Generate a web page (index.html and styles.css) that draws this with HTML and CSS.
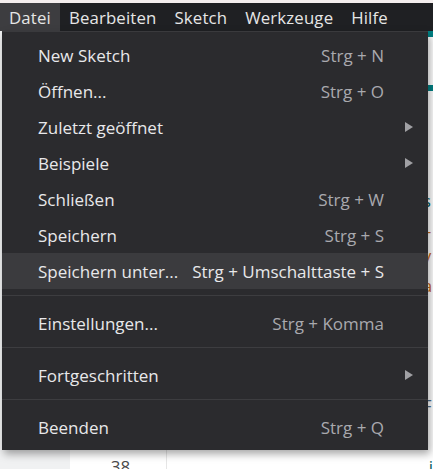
FILE: index.html
```html
<!DOCTYPE html>
<html lang="de">
<head>
<meta charset="utf-8">
<link rel="stylesheet" href="styles.css">
</head>
<body>
<div class="app">
  <div class="topstrip"></div>
  <nav class="menubar">
    <span class="mitem active">Datei</span>
    <span class="mitem">Bearbeiten</span>
    <span class="mitem">Sketch</span>
    <span class="mitem">Werkzeuge</span>
    <span class="mitem">Hilfe</span>
  </nav>
  <div class="workspace">
    <div class="sidebar"></div>
    <div class="gutter"><span class="lineno">38</span></div>
    <div class="code">
      <div class="tb tb1"></div>
      <div class="tb tb2"></div>
      <div class="cline c-teal">s</div>
      <div class="cline c-orange small">–</div>
      <div class="cline c-orange">y</div>
      <div class="cline c-orange">a</div>
      <div class="cline c-blue">F</div>
      <div class="cline last"><span class="c-teal">i</span></div>
    </div>
  </div>

  <div class="dropdown">
    <div class="row"><span class="label">New Sketch</span><span class="sc">Strg + N</span><span class="arr"></span></div>
    <div class="row"><span class="label">Öffnen...</span><span class="sc">Strg + O</span><span class="arr"></span></div>
    <div class="row"><span class="label">Zuletzt geöffnet</span><span class="sc"></span><span class="arr"><i class="tri"></i></span></div>
    <div class="row"><span class="label">Beispiele</span><span class="sc"></span><span class="arr"><i class="tri"></i></span></div>
    <div class="row"><span class="label">Schließen</span><span class="sc">Strg + W</span><span class="arr"></span></div>
    <div class="row"><span class="label">Speichern</span><span class="sc">Strg + S</span><span class="arr"></span></div>
    <div class="row hl"><span class="label">Speichern unter...</span><span class="sc">Strg + Umschalttaste + S</span><span class="arr"></span></div>
    <div class="sep"></div>
    <div class="row"><span class="label">Einstellungen...</span><span class="sc">Strg + Komma</span><span class="arr"></span></div>
    <div class="sep"></div>
    <div class="row"><span class="label">Fortgeschritten</span><span class="sc"></span><span class="arr"><i class="tri"></i></span></div>
    <div class="sep"></div>
    <div class="row"><span class="label">Beenden</span><span class="sc">Strg + Q</span><span class="arr"></span></div>
  </div>
</div>
</body>
</html>
```

FILE: styles.css
```css
* { box-sizing: border-box; }
html, body { margin: 0; padding: 0; }
body {
  width: 433px;
  height: 469px;
  overflow: hidden;
  background: #ffffff;
  font-family: "Open Sans", "Noto Sans", sans-serif;
}
.app {
  position: relative;
  width: 433px;
  height: 469px;
  display: flex;
  flex-direction: column;
}
.topstrip {
  height: 3px;
  background: #f4eeee;
}
.menubar {
  height: 28px;
  background: #1f2023;
  display: flex;
  align-items: stretch;
}
.mitem {
  padding: 0 9px;
  display: flex;
  align-items: center;
  color: #e6e6e6;
  font-size: 16.8px;
  letter-spacing: 0.15px;
}
.mitem.active {
  background: #3d3d40;
}
.workspace {
  flex: 1;
  display: flex;
}
.sidebar {
  width: 72px;
  background: #f0f1f2;
}
.gutter {
  width: 100px;
  background: #ffffff;
  border-right: 1px solid #e6e6e6;
  display: flex;
  flex-direction: column;
  justify-content: flex-end;
}
.lineno {
  padding-left: 41px;
  font-size: 17px;
  color: #4a4a4a;
  line-height: 22px;
  height: 13px;
  overflow: hidden;
}
.code {
  flex: 1;
  display: flex;
  flex-direction: column;
  padding-left: 256px;
  font-size: 17px;
}
.tb {
  height: 6px;
  background: #008184;
}
.tb1 { margin-top: 0; }
.tb2 { margin-top: 48px; }
.cline {
  height: 30px;
  line-height: 30px;
}
.cline:nth-of-type(3) { margin-top: 95px; }
.c-teal { color: #005c5f; }
.c-orange { color: #c96a1a; }
.c-blue { color: #4a6b8a; }
.cline.small { height: 25px; }
.cline.c-blue { margin-top: 90px; }
.cline.last { margin-top: auto; height: 13px; line-height: 22px; overflow: hidden; padding-left: 6px; }

.dropdown {
  position: absolute;
  top: 31px;
  left: 2px;
  width: 426px;
  background: #2b2b2e;
  border-top: 1px solid #3a3a3d;
  padding: 5px 0 5px;
  box-shadow: 2px 4px 8px rgba(0,0,0,0.35);
  font-size: 17px;
}
.row {
  height: 36px;
  display: grid;
  grid-template-columns: 1fr auto 44px;
  align-items: center;
  padding-left: 36px;
  color: #e8e8ea;
}
.row.hl {
  background: #3b3b3e;
}
.sc {
  color: #a9a9ae;
}
.row.hl .sc { color: #e8e8ea; }
.arr {
  display: flex;
  align-items: center;
  padding-left: 21px;
}
.tri {
  display: block;
  width: 0;
  height: 0;
  border-top: 5px solid transparent;
  border-bottom: 5px solid transparent;
  border-left: 8px solid #a0a0a4;
}
.sep {
  height: 1px;
  background: #3d3d40;
  margin: 6px 0 9px;
}
```
